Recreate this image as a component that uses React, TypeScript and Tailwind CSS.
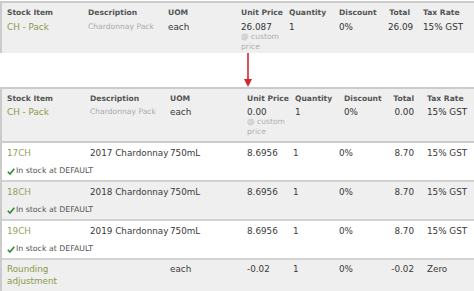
import React from 'react';

const font = { fontFamily: '"DejaVu Sans", Verdana, sans-serif' };

const topCols = 'grid grid-cols-[81px_80px_73px_48px_50px_49px_35px_1fr] pl-[5px]';
const headCols = 'grid grid-cols-[83px_80px_77px_48px_49px_47px_36px_1fr] pl-[5px]';
const itemCols = 'grid grid-cols-[83px_80px_77px_46px_46px_52px_36px_1fr] pl-[5px]';

const headers = ['Stock Item', 'Description', 'UOM', 'Unit Price', 'Quantity', 'Discount', 'Total', 'Tax Rate'];

function HeaderRow({ cols }: { cols: string }) {
  return (
    <div className={`${cols} h-[12px] text-[7.6px] leading-[12px] font-bold text-[#555]`}>
      {headers.map((h, i) => (
        <div key={h} className={i === 6 ? 'text-right pr-[13px] whitespace-nowrap' : 'whitespace-nowrap'}>
          {h}
        </div>
      ))}
    </div>
  );
}

function PackRow({ cols, price, total }: { cols: string; price: string; total: string }) {
  return (
    <div className={`${cols} text-[8.8px] leading-[10px] text-[#333]`}>
      <div className="text-[#8a9a4b]">CH - Pack</div>
      <div className="text-[7.6px] text-[#aaa] whitespace-nowrap">Chardonnay Pack</div>
      <div>each</div>
      <div>
        <div>{price}</div>
        <div className="text-[7.6px] text-[#b0b0b0]">@ custom</div>
        <div className="text-[7.6px] text-[#b0b0b0]">price</div>
      </div>
      <div>1</div>
      <div>0%</div>
      <div className="text-right pr-[13px]">{total}</div>
      <div className="whitespace-nowrap">15% GST</div>
    </div>
  );
}

function Check() {
  return (
    <svg width="8" height="7" viewBox="0 0 8 7" className="mr-[1px]">
      <path d="M0.8 3.8 L3 6 L7.3 0.8" fill="none" stroke="#2f8a2f" strokeWidth="1.6" />
    </svg>
  );
}

function ItemRow({ code, desc, gray }: { code: string; desc: string; gray?: boolean }) {
  return (
    <div className={`h-[39px] border-b-2 border-[#d2d2d2] pt-[4px] ${gray ? 'bg-[#efefef]' : 'bg-white'}`}>
      <div className={`${itemCols} text-[8.8px] leading-[12px] text-[#3a3a3a]`}>
        <div className="text-[#95a15a]">{code}</div>
        <div className="whitespace-nowrap">{desc}</div>
        <div>750mL</div>
        <div>8.6956</div>
        <div>1</div>
        <div>0%</div>
        <div className="text-right pr-[13px]">8.70</div>
        <div className="whitespace-nowrap">15% GST</div>
      </div>
      <div className="flex items-center pl-[5px] mt-[7px] h-[10px] text-[7.8px] text-[#555]">
        <Check />
        <span>In stock at DEFAULT</span>
      </div>
    </div>
  );
}

export default function App() {
  return (
    <div className="w-[474px] h-[291px] overflow-hidden bg-white" style={font}>
      {/* Before */}
      <div className="mt-[1px] h-[52px] bg-[#efefef] border-t-2 border-l-2 border-[#cbcbcb] pt-[4px]">
        <HeaderRow cols={topCols} />
        <div className="mt-[3px]">
          <PackRow cols={topCols} price="26.087" total="26.09" />
        </div>
      </div>

      {/* Arrow */}
      <div className="h-[34px] pl-[243px]">
        <svg width="10" height="34" viewBox="0 0 10 34">
          <line x1="5" y1="0" x2="5" y2="26" stroke="#d4262e" strokeWidth="1.6" />
          <polygon points="1,26 9,26 5,34" fill="#d4262e" />
        </svg>
      </div>

      {/* After */}
      <div className="border-l-2 border-[#cbcbcb]">
        <div className="h-[56px] bg-[#efefef] border-t-2 border-b-2 border-[#cbcbcb] pt-[4px]">
          <HeaderRow cols={headCols} />
          <div className="mt-[2px]">
            <PackRow cols={headCols} price="0.00" total="0.00" />
          </div>
        </div>
        <ItemRow code="17CH" desc="2017 Chardonnay" />
        <ItemRow code="18CH" desc="2018 Chardonnay" gray />
        <ItemRow code="19CH" desc="2019 Chardonnay" />
        <div className="h-[40px] bg-[#efefef] pt-[3px]">
          <div className={`${itemCols} text-[8.8px] leading-[12px] text-[#3a3a3a]`}>
            <div className="text-[#8a9a4b] pr-[20px]">Rounding adjustment</div>
            <div></div>
            <div>each</div>
            <div>-0.02</div>
            <div>1</div>
            <div>0%</div>
            <div className="text-right pr-[13px]">-0.02</div>
            <div>Zero</div>
          </div>
        </div>
      </div>
    </div>
  );
}
